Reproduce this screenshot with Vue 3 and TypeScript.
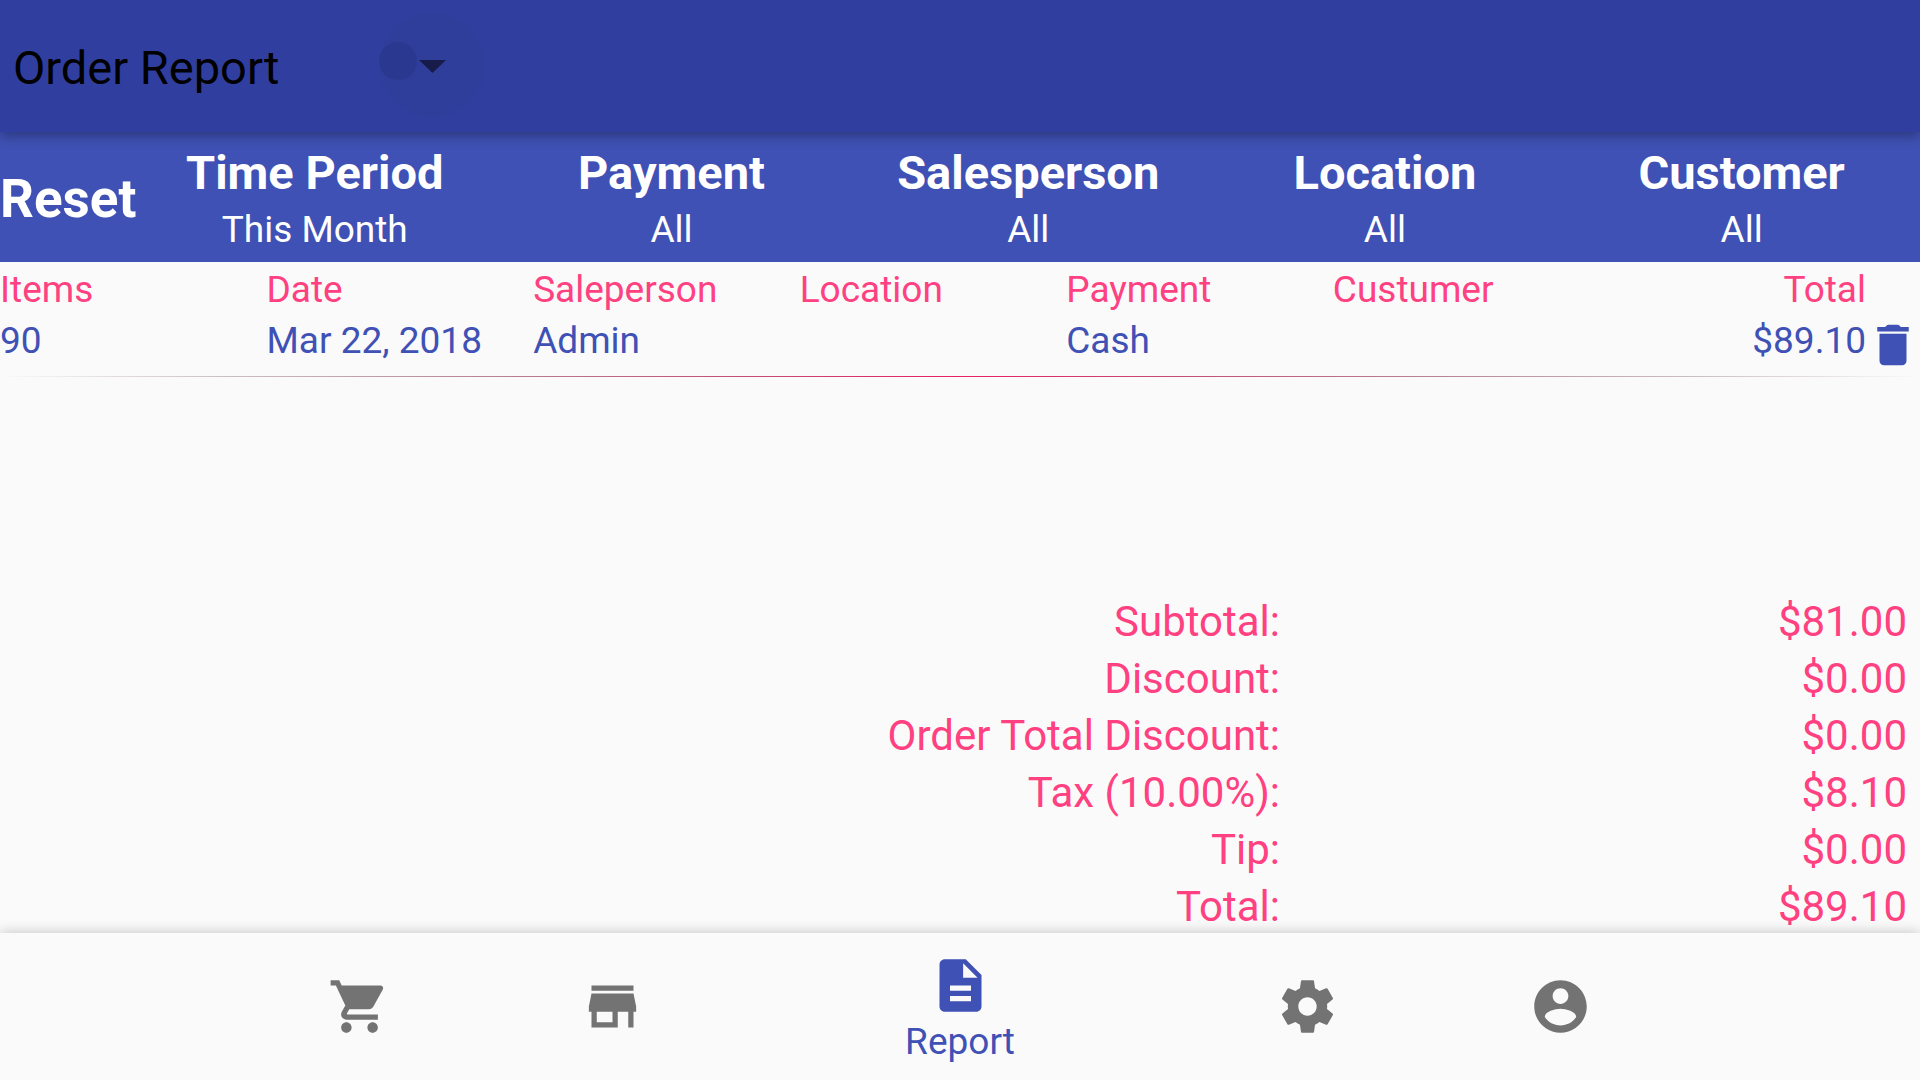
<script setup lang="ts">
import { ref } from 'vue'

interface Filter { label: string; value: string }
interface Order { items: number; date: string; salesperson: string; location: string; payment: string; customer: string; total: string }
interface Tab { label: string; path: string }

const report = ref('Order Report')
const reports = ['Order Report', 'Item Report']

const filters: Filter[] = [
  { label: 'Time Period', value: 'This Month' },
  { label: 'Payment', value: 'All' },
  { label: 'Salesperson', value: 'All' },
  { label: 'Location', value: 'All' },
  { label: 'Customer', value: 'All' },
]

const orders: Order[] = [
  { items: 90, date: 'Mar 22, 2018', salesperson: 'Admin', location: '', payment: 'Cash', customer: '', total: '$89.10' },
]

const totals: [string, string][] = [
  ['Subtotal:', '$81.00'],
  ['Discount:', '$0.00'],
  ['Order Total Discount:', '$0.00'],
  ['Tax (10.00%):', '$8.10'],
  ['Tip:', '$0.00'],
  ['Total:', '$89.10'],
]

const active = ref('Report')
const tabs: Tab[] = [
  { label: 'Cart', path: 'M7 18c-1.1 0-1.99.9-1.99 2S5.9 22 7 22s2-.9 2-2-.9-2-2-2zM1 2v2h2l3.6 7.59-1.35 2.45c-.16.28-.25.61-.25.96 0 1.1.9 2 2 2h12v-2H7.42c-.14 0-.25-.11-.25-.25l.03-.12.9-1.63h7.45c.75 0 1.41-.41 1.75-1.03l3.58-6.49c.08-.14.12-.31.12-.48 0-.55-.45-1-1-1H5.21l-.94-2H1zm16 16c-1.1 0-1.99.9-1.99 2s.89 2 1.99 2 2-.9 2-2-.9-2-2-2z' },
  { label: 'Store', path: 'M20 4H4v2h16V4zm1 10v-2l-1-5H4l-1 5v2h1v6h10v-6h4v6h2v-6h1zm-9 4H6v-4h6v4z' },
  { label: 'Report', path: 'M14 2H6c-1.1 0-1.99.9-1.99 2L4 20c0 1.1.89 2 1.99 2H18c1.1 0 2-.9 2-2V8l-6-6zm2 16H8v-2h8v2zm0-4H8v-2h8v2zm-3-5V3.500L18.500 9H13z' },
  { label: 'Settings', path: 'M19.43 12.98c.04-.32.07-.64.07-.98s-.03-.66-.07-.98l2.110-1.650c.19-.15.24-.42.12-.64l-2-3.460c-.12-.22-.39-.3-.61-.22l-2.490 1c-.52-.4-1.080-.73-1.690-.98l-.38-2.650C14.460 2.180 14.250 2 14 2h-4c-.25 0-.46.18-.49.42l-.38 2.650c-.61.25-1.170.59-1.690.98l-2.490-1c-.23-.09-.49 0-.61.22l-2 3.460c-.13.22-.07.49.12.64l2.110 1.650c-.04.32-.07.65-.07.98s.03.66.07.98l-2.110 1.650c-.19.15-.24.42-.12.64l2 3.460c.12.22.39.3.61.22l2.490-1c.52.4 1.080.73 1.690.98l.38 2.650c.03.24.24.42.49.42h4c.25 0 .46-.18.49-.42l.38-2.650c.61-.25 1.170-.59 1.690-.98l2.490 1c.23.09.49 0 .61-.22l2-3.460c.12-.22.07-.49-.12-.64l-2.110-1.650zM12 15.500c-1.930 0-3.500-1.570-3.500-3.500s1.570-3.500 3.500-3.500 3.500 1.570 3.500 3.500-1.570 3.500-3.500 3.500z' },
  { label: 'Account', path: 'M12 2C6.480 2 2 6.480 2 12s4.480 10 10 10 10-4.480 10-10S17.520 2 12 2zm0 3c1.660 0 3 1.340 3 3s-1.340 3-3 3-3-1.340-3-3 1.340-3 3-3zm0 14.200c-2.500 0-4.710-1.280-6-3.220.03-1.990 4-3.080 6-3.080 1.990 0 5.970 1.090 6 3.080-1.290 1.940-3.500 3.220-6 3.220z' },
]
</script>

<template>
  <div class="page">
    <header class="appbar">
      <div class="spinner">
        <select v-model="report" aria-label="Report type">
          <option v-for="r in reports" :key="r">{{ r }}</option>
        </select>
        <svg class="ripple" viewBox="0 1 106 106" aria-hidden="true">
          <circle cx="53" cy="53" r="53" fill="#000" fill-opacity=".02" />
          <circle cx="19" cy="49" r="19" fill="#000" fill-opacity=".07" />
          <path d="M40 48h27L53.500 61z" fill="#181c4a" />
        </svg>
      </div>
    </header>

    <section class="filters">
      <button class="reset" type="button">Reset</button>
      <button v-for="f in filters" :key="f.label" class="filter" type="button">
        <span class="filter-label">{{ f.label }}</span>
        <span>{{ f.value }}</span>
      </button>
    </section>

    <main>
      <table class="orders">
        <thead>
          <tr>
            <th>Items</th>
            <th>Date</th>
            <th>Saleperson</th>
            <th>Location</th>
            <th>Payment</th>
            <th>Custumer</th>
            <th class="amount">Total</th>
            <td class="action"></td>
          </tr>
        </thead>
        <tbody>
          <tr v-for="(o, i) in orders" :key="i">
            <td>{{ o.items }}</td>
            <td>{{ o.date }}</td>
            <td>{{ o.salesperson }}</td>
            <td>{{ o.location }}</td>
            <td>{{ o.payment }}</td>
            <td>{{ o.customer }}</td>
            <td class="amount">{{ o.total }}</td>
            <td class="action">
              <button type="button" aria-label="Delete order">
                <svg viewBox="0 0 24 24"><path d="M6 19c0 1.100.9 2 2 2h8c1.100 0 2-.9 2-2V7H6v12zM19 4h-3.500l-.7-.7q-.3-.3-.8-.3h-4q-.5 0-.8.3L8.500 4H5v2h14V4z" /></svg>
              </button>
            </td>
          </tr>
        </tbody>
      </table>
      <hr />

      <dl class="totals">
        <div v-for="[label, value] in totals" :key="label" class="total">
          <dt>{{ label }}</dt>
          <dd>{{ value }}</dd>
        </div>
      </dl>
    </main>

    <nav class="tabs">
      <a v-for="t in tabs" :key="t.label" href="#" class="tab" :class="{ active: t.label === active }" :aria-label="t.label" @click.prevent="active = t.label">
        <svg viewBox="0 0 24 24" aria-hidden="true"><path :d="t.path" /></svg>
        <span v-if="t.label === active">{{ t.label }}</span>
      </a>
    </nav>
  </div>
</template>

<style>
body {
  margin: 0;
  background: #fafafa;
}
</style>

<style scoped>
.page {
  display: flex;
  flex-direction: column;
  min-height: 100vh;
  font-family: Roboto, sans-serif;
  font-size: 37px;
  line-height: 43px;
  color: #3f51b5;
}
button {
  padding: 0;
  border: 0;
  background: none;
  color: inherit;
  font: inherit;
}
.appbar {
  position: relative;
  display: flex;
  height: 132px;
  background: #303f9f;
  box-shadow: 0 4px 12px rgba(0, 0, 0, .32);
}
.spinner {
  display: flex;
  align-items: center;
}
select {
  width: 379px;
  height: 132px;
  padding: 2px 0 0 13px;
  border: 0;
  appearance: none;
  background: none;
  color: #000;
  font: 47px/55px Roboto, sans-serif;
}
.ripple {
  width: 106px;
  height: 106px;
}
.filters {
  display: flex;
  height: 130px;
  background: #3f51b5;
  color: #fff;
}
.reset {
  padding-top: 4px;
  font-size: 53px;
  font-weight: 700;
}
.filter {
  flex: 1;
  display: flex;
  flex-direction: column;
  align-items: center;
  gap: 8px;
  padding-top: 13px;
}
.filter-label {
  font-size: 47px;
  font-weight: 700;
  line-height: 55px;
}
main {
  flex: 1;
  display: flex;
  flex-direction: column;
}
.orders {
  width: 100%;
  table-layout: fixed;
  border-collapse: collapse;
}
th,
td {
  padding: 6px 0 0;
  text-align: left;
  vertical-align: top;
  font-weight: 400;
}
th {
  padding-bottom: 2px;
  color: #ff4081;
}
.amount {
  text-align: right;
}
.action {
  width: 54px;
  padding-top: 5px;
}
.action button {
  display: block;
}
.action svg {
  display: block;
  width: 54px;
  height: 54px;
  fill: #3f51b5;
}
hr {
  width: 100%;
  height: 1px;
  margin: 4px 0 0;
  border: 0;
  /* fades from black through dark rose to pink at the centre */
  background: linear-gradient(
    to right,
    rgba(0, 0, 0, 0),
    rgba(58, 8, 25, .25) 12%,
    rgba(117, 15, 50, .5) 25%,
    rgba(175, 23, 74, .75) 38%,
    #e91e63 50%,
    rgba(175, 23, 74, .75) 62%,
    rgba(117, 15, 50, .5) 75%,
    rgba(58, 8, 25, .25) 88%,
    rgba(0, 0, 0, 0)
  );
}
.totals {
  display: flex;
  flex-direction: column;
  gap: 8px;
  margin: auto 0 0;
  padding: 16px 0 2px;
  color: #ff4081;
  font-size: 42px;
  line-height: 49px;
}
.total {
  display: grid;
  grid-template-columns: 2fr 1fr;
  text-align: right;
}
dd {
  margin: 0;
  padding-right: 13px;
}
.tabs {
  position: relative;
  display: flex;
  justify-content: center;
  height: 147px;
  background: #fafafa;
  box-shadow: 0 -1px 12px rgba(0, 0, 0, .2);
}
.tab {
  display: flex;
  flex-direction: column;
  align-items: center;
  justify-content: center;
  width: 253px;
  color: #737373;
  text-decoration: none;
}
.tab svg {
  width: 63px;
  height: 63px;
  fill: currentColor;
}
.tab.active {
  gap: 3px;
  width: 442px;
  padding-top: 3px;
  color: #3f51b5;
}
</style>
